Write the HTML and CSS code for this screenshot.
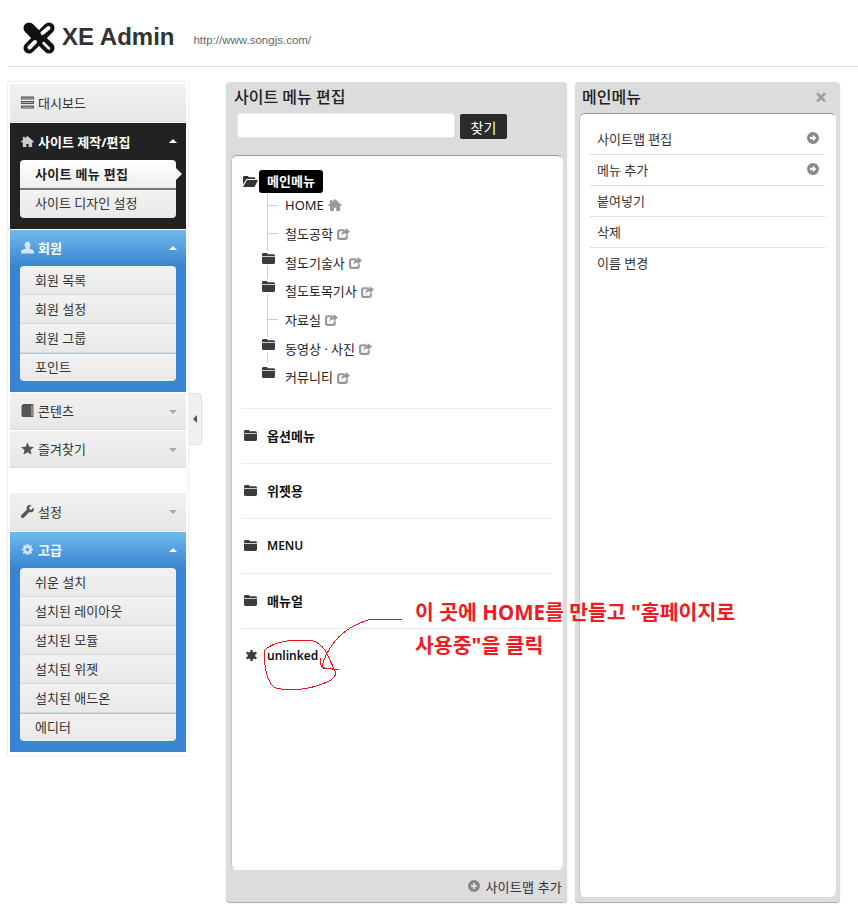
FILE: index.html
```html
<!DOCTYPE html>
<html lang="ko">
<head>
    <meta charset="UTF-8">
    <meta name="viewport" content="width=device-width, initial-scale=1.0">
    <title>XE Admin</title>
    <link rel="stylesheet" href="styles.css">
</head>
<body>
    <svg class="icon-defs" width="0" height="0">
        <symbol id="i-home" viewBox="0 0 14 12"><path d="M7 0 14 6.200 13 7.300 12 6.500V12H8.200V8.800H5.800V12H2V6.500L1 7.300 0 6.200 2 4.400V1H4V2.600Z"/></symbol>
        <symbol id="i-list" viewBox="0 0 13 12"><path d="M0 0H13V3H0ZM0 4.500H13V7.500H0ZM0 9H13V12H0Z"/><path d="M1 1.200H12V1.900H1ZM1 5.700H12V6.400H1ZM1 10.200H12V10.900H1Z" fill="#fff" opacity=".7"/></symbol>
        <symbol id="i-user" viewBox="0 0 13 12"><path d="M6.500 0C8.300 0 9.400 1.400 9.400 3.400 9.400 5 8.600 6.200 7.900 6.900 9.800 7.500 13 8.200 13 10V12H0V10C0 8.200 3.200 7.500 5.100 6.900 4.400 6.200 3.600 5 3.600 3.400 3.600 1.400 4.700 0 6.500 0Z"/></symbol>
        <symbol id="i-book" viewBox="0 0 11 12"><path d="M2 0H11V12H2C.9 12 0 11.300 0 10.500V2C0 .9.900 0 2 0Z"/><path d="M9.300 1.200H10V11H9.300Z" fill="#ddd"/></symbol>
        <symbol id="i-star" viewBox="0 0 13 12"><path d="M6.500 0 8.400 4.200 13 4.600 9.500 7.600 10.600 12 6.500 9.700 2.400 12 3.500 7.600 0 4.600 4.600 4.200Z"/></symbol>
        <symbol id="i-wrench" viewBox="0 0 13 13"><path d="M12.700 2.600 10.400 4.800 8.600 4.400 8.200 2.600 10.400.3C8.600-.4 6.700.2 6 1.600 5.500 2.600 5.600 3.700 6 4.500L.5 10C-.2 10.700-.2 11.700.4 12.400 1.100 13.100 2.200 13.100 2.900 12.400L8.300 7C9.300 7.500 10.500 7.500 11.500 6.900 12.800 6.100 13.300 4.300 12.700 2.600Z"/></symbol>
        <symbol id="i-cog" viewBox="-1 -1 14 14"><path fill-rule="evenodd" d="M5 0H7L7.300 1.500 8.500 2 9.800 1.200 11 2.500 10 3.700 10.500 5 12 5.200V6.900L10.500 7.200 10 8.400 10.900 9.700 9.600 11 8.300 10.100 7.200 10.500 6.900 12H5.100L4.800 10.500 3.600 10 2.300 10.900 1 9.700 1.900 8.400 1.500 7.200 0 6.900V5.100L1.500 4.800 2 3.600 1.100 2.300 2.400 1 3.700 1.900 4.800 1.500ZM6 4A2 2 0 1 0 6 8 2 2 0 1 0 6 4Z"/></symbol>
        <symbol id="i-folder" viewBox="0 0 13 11"><path d="M1.500 0H5L5.800 1.300H11.500C12.300 1.300 13 1.900 13 2.700V3.300H0V1.500C0 .7.700 0 1.500 0ZM0 4H13V9.500C13 10.300 12.300 11 11.500 11H1.500C.7 11 0 10.300 0 9.500Z"/></symbol>
        <symbol id="i-open" viewBox="0 0 15 11"><path d="M1.300 0H5L5.800 1.200H11C11.700 1.200 12.200 1.700 12.200 2.400V3H3.500L0 8.500V1.300C0 .6.600 0 1.300 0ZM4 4H15L11.500 11H0Z"/></symbol>
        <symbol id="i-share" viewBox="0 0 12 11"><path fill-rule="evenodd" d="M2.200 1H7V3H2.800C2.300 3 2 3.300 2 3.800V8.200C2 8.700 2.300 9 2.800 9H7.200C7.700 9 8 8.700 8 8.200V7.500L10 5.700V8.800C10 10 9.100 11 7.800 11H2.200C1 11 0 10 0 8.800V3.200C0 2 1 1 2.200 1Z"/><path d="M8 0 12 3.300 8 6.800V4.900C6.200 4.900 5 5.600 4 7.500 4 4.400 5.600 2.200 8 2.100Z"/></symbol>
        <symbol id="i-asterisk" viewBox="0 0 11 11"><circle cx="5.500" cy="5.500" r="3.800"/><path d="M4.300 0H6.700V11H4.300ZM9.800 1.400 11 3.500 1.200 9.600 0 7.500ZM1.200 1.400 11 7.500 9.800 9.600 0 3.500Z"/></symbol>
        <symbol id="i-arrow" viewBox="0 0 12 12"><path fill-rule="evenodd" d="M6 0A6 6 0 1 1 6 12 6 6 0 1 1 6 0ZM6.300 3 5.500 3.800 6.300 4.800H3V7.200H6.300L5.500 8.200 6.300 9 9.300 6Z"/></symbol>
        <symbol id="i-plus" viewBox="0 0 12 12"><path fill-rule="evenodd" d="M6 0A6 6 0 1 1 6 12 6 6 0 1 1 6 0ZM5 3V5H3V7H5V9H7V7H9V5H7V3Z"/></symbol>
    </svg>

    <header class="site-head">
        <svg class="logo" viewBox="0 0 32 32" width="32" height="32">
            <path d="M6 6 26 26" stroke="#111" stroke-width="11" stroke-linecap="round"/>
            <path d="M26 6 6 26" stroke="#111" stroke-width="11" stroke-linecap="round"/>
            <path d="M19.500 11 25.500 6M6.500 25.500 12 20" stroke="#fff" stroke-width="4" stroke-linecap="round" fill="none"/>
            <path d="M20.500 21 26 26.500" stroke="#fff" stroke-width="2.500" stroke-linecap="round" fill="none"/>
        </svg>
        <span class="logo-text">XE Admin</span>
        <a class="site-url" href="#">http://www.songjs.com/</a>
    </header>

    <div class="layout">
        <nav class="sidebar">
            <div class="nav-head tall"><svg class="nav-icon"><use href="#i-list"/></svg>대시보드</div>

            <section class="nav-open nav-dark">
                <div class="nav-head bold"><svg class="nav-icon"><use href="#i-home"/></svg>사이트 제작/편집<i class="caret up"></i></div>
                <ul class="sub">
                    <li class="active">사이트 메뉴 편집</li>
                    <li>사이트 디자인 설정</li>
                </ul>
            </section>

            <section class="nav-open nav-blue">
                <div class="nav-head bold"><svg class="nav-icon"><use href="#i-user"/></svg>회원<i class="caret up"></i></div>
                <ul class="sub">
                    <li>회원 목록</li>
                    <li>회원 설정</li>
                    <li>회원 그룹</li>
                    <li class="last">포인트</li>
                </ul>
            </section>

            <div class="nav-head"><svg class="nav-icon"><use href="#i-book"/></svg>콘텐츠<i class="caret"></i></div>
            <div class="nav-head"><svg class="nav-icon"><use href="#i-star"/></svg>즐겨찾기<i class="caret"></i></div>

            <div class="nav-gap"></div>

            <div class="nav-head tall"><svg class="nav-icon"><use href="#i-wrench"/></svg>설정<i class="caret"></i></div>

            <section class="nav-open nav-blue">
                <div class="nav-head bold"><svg class="nav-icon"><use href="#i-cog"/></svg>고급<i class="caret up"></i></div>
                <ul class="sub">
                    <li>쉬운 설치</li>
                    <li>설치된 레이아웃</li>
                    <li>설치된 모듈</li>
                    <li>설치된 위젯</li>
                    <li>설치된 애드온</li>
                    <li class="last">에디터</li>
                </ul>
            </section>

            <div class="collapse"><i></i></div>
        </nav>

        <main class="panel panel-main">
            <h2>사이트 메뉴 편집</h2>
            <form class="search">
                <input type="text">
                <button type="button">찾기</button>
            </form>
            <div class="panel-body tree">
                <div class="root">
                    <svg class="folder-open"><use href="#i-open"/></svg><span class="chip">메인메뉴</span>
                </div>
                <ul class="branch">
                    <li><span class="dash"></span>HOME <svg class="ico-home"><use href="#i-home"/></svg></li>
                    <li><span class="dash"></span>철도공학 <svg class="ico-share"><use href="#i-share"/></svg></li>
                    <li><svg class="ico-folder"><use href="#i-folder"/></svg>철도기술사 <svg class="ico-share"><use href="#i-share"/></svg></li>
                    <li><svg class="ico-folder"><use href="#i-folder"/></svg>철도토목기사 <svg class="ico-share"><use href="#i-share"/></svg></li>
                    <li><span class="dash"></span>자료실 <svg class="ico-share"><use href="#i-share"/></svg></li>
                    <li><svg class="ico-folder"><use href="#i-folder"/></svg>동영상 · 사진 <svg class="ico-share"><use href="#i-share"/></svg></li>
                    <li><svg class="ico-folder"><use href="#i-folder"/></svg>커뮤니티 <svg class="ico-share"><use href="#i-share"/></svg></li>
                </ul>
                <div class="tree-row"><svg class="ico-folder"><use href="#i-folder"/></svg>옵션메뉴</div>
                <div class="tree-row"><svg class="ico-folder"><use href="#i-folder"/></svg>위젯용</div>
                <div class="tree-row latin"><svg class="ico-folder"><use href="#i-folder"/></svg>MENU</div>
                <div class="tree-row"><svg class="ico-folder"><use href="#i-folder"/></svg>매뉴얼</div>
                <div class="tree-row latin"><svg class="ico-asterisk"><use href="#i-asterisk"/></svg>unlinked</div>
            </div>
            <div class="panel-foot"><svg class="ico-plus"><use href="#i-plus"/></svg>사이트맵 추가</div>
        </main>

        <aside class="panel panel-side">
            <h2>메인메뉴<span class="close">×</span></h2>
            <ul class="panel-body action-list">
                <li>사이트맵 편집<svg class="ico-arrow"><use href="#i-arrow"/></svg></li>
                <li>메뉴 추가<svg class="ico-arrow"><use href="#i-arrow"/></svg></li>
                <li>붙여넣기</li>
                <li>삭제</li>
                <li>이름 변경</li>
            </ul>
        </aside>
    </div>

    <!-- red notes drawn over the capture -->
    <svg class="scribble" width="858" height="920">
        <path d="M402 619H373C366 620 361 622 352 627 345 631 340 635 336 640 331 646 327 652 324 660 322 665 322 668 325 668L339 670"/>
        <path d="M320 658C320 663 321 666 323 668L333 669"/>
        <path d="M265 650C270 645 279 641 297 640 306 640 313 640 316 642 321 645 325 649 327 654 330 660 333 667 336 673 335 677 332 680 327 682 320 685 312 688 302 689 292 690 283 690 276 688 271 686 269 682 267 675 265 668 264 658 265 650Z"/>
    </svg>
    <p class="note">이 곳에 HOME를 만들고 "홈페이지로<br>사용중"을 클릭</p>
</body>
</html>
```

FILE: styles.css
```css
* {
    box-sizing: border-box;
}

body {
    margin: 0;
    font-family: "Noto Sans", "Noto Sans CJK KR", sans-serif;
    font-size: 13px;
    color: #222;
    background-color: #fff;
}

ul {
    list-style: none;
    margin: 0;
    padding: 0;
}

.icon-defs {
    position: absolute;
}

/* header */
.site-head {
    display: flex;
    align-items: center;
    height: 67px;
    margin-left: 8px;
    padding: 10px 0 0 15px;
    border-bottom: 1px solid #ddd;
}

.logo {
    flex: none;
    margin-right: 7px;
}

.logo-text {
    font-family: "Liberation Sans", Arial, sans-serif;
    font-size: 24px;
    font-weight: bold;
    color: #333;
    margin-top: -2px;
}

.site-url {
    font-family: "Liberation Sans", Arial, sans-serif;
    font-size: 11.500px;
    color: #666;
    text-decoration: none;
    margin: 3px 0 0 19px;
}

.layout {
    display: flex;
    align-items: flex-start;
    padding: 15px 0 18px 8px;
}

/* sidebar */
.sidebar {
    position: relative;
    width: 180px;
    flex: none;
    padding: 2px;
    box-shadow: 0 0 2px rgba(0, 0, 0, 0.18);
    background-color: #fff;
}

.nav-head {
    display: flex;
    align-items: center;
    position: relative;
    height: 37px;
    margin-bottom: 1px;
    padding: 0 0 2px 11px;
    background: linear-gradient(#f1f1f1, #e7e7e7);
    border-bottom: 1px solid #dcdcdc;
    color: #333;
}

.nav-head.tall {
    height: 38px;
    padding-bottom: 0;
}

.nav-head.bold {
    font-weight: bold;
}

.nav-icon {
    width: 13px;
    height: 13px;
    margin-right: 4px;
    fill: #555;
    flex: none;
}

.caret {
    position: absolute;
    right: 9px;
    top: 17px;
    border-left: 4px solid transparent;
    border-right: 4px solid transparent;
    border-top: 4px solid #aaa;
}

.caret.up {
    top: 16px;
    border-top: 0;
    border-bottom: 4px solid #fff;
}

.nav-open {
    margin-bottom: 1px;
    padding-bottom: 11px;
}

.nav-open .nav-head {
    height: 36px;
    margin-bottom: 0;
    border-bottom: 0;
    background: none;
    color: #fff;
}

.nav-open .nav-icon {
    fill: #d4e6f6;
}

.nav-dark {
    background-color: #222;
}

.nav-dark .nav-head {
    height: 37px;
    padding-bottom: 0;
}

.nav-dark .nav-icon {
    fill: #ccc;
}

.nav-blue {
    background: linear-gradient(#6fbaeb, #3985d1 36px) #3985d1;
}

.sub {
    margin: 0 10px;
    border-radius: 4px;
    overflow: hidden;
}

.sub li {
    height: 29px;
    line-height: 29px;
    padding-left: 15px;
    color: #333;
    background: linear-gradient(#f2f2f2, #e9e9e9);
    border-bottom: 1px solid #d8d8d8;
}

.sub li:last-child {
    height: 28px;
    line-height: 27px;
    border-bottom: 0;
}

.sub li.last {
    border-top: 1px solid #a9c3dc;
}

.nav-dark .sub {
    overflow: visible;
    border-radius: 4px;
}

.nav-dark .sub li {
    border-radius: 0 0 4px 4px;
}

.nav-dark .sub li.active {
    position: relative;
    height: 30px;
    line-height: 28px;
    font-weight: bold;
    letter-spacing: 0.3px;
    color: #222;
    background: linear-gradient(#fff, #eee);
    border-radius: 4px 4px 0 0;
    border-bottom: 2px solid #777;
}

.nav-dark .sub li.active::after {
    content: "";
    position: absolute;
    right: -6px;
    top: 8px;
    border-top: 6px solid transparent;
    border-bottom: 6px solid transparent;
    border-left: 6px solid #f4f4f4;
}

.nav-gap {
    height: 24px;
}

.collapse {
    position: absolute;
    left: 181px;
    top: 311px;
    width: 13px;
    height: 52px;
    display: flex;
    align-items: center;
    justify-content: center;
    background-color: #f0f0f0;
    border: 1px solid #e2e2e2;
    border-left: 0;
    border-radius: 0 3px 3px 0;
}

.collapse i {
    border-top: 4px solid transparent;
    border-bottom: 4px solid transparent;
    border-right: 4px solid #555;
}

/* panels */
.panel {
    flex: none;
    height: 820px;
    display: flex;
    flex-direction: column;
    background-color: #dcdcdc;
    border-radius: 4px;
    box-shadow: 0 1px 1px #aaa;
}

.panel h2 {
    margin: 0;
    font-size: 16px;
    font-weight: 500;
    line-height: 20px;
    color: #222;
    padding: 5px 8px 0;
}

.panel-main {
    width: 341px;
    margin-left: 38px;
}

.panel-side {
    width: 265px;
    margin-left: 8px;
}

.panel-side h2 {
    padding-left: 7px;
}

.search {
    display: flex;
    gap: 5px;
    margin: 6px 0 0 11px;
}

.search input {
    width: 218px;
    height: 25px;
    margin: 0;
    border: 1px solid #e8e8e8;
    border-radius: 3px;
    background-color: #fff;
}

.search button {
    width: 47px;
    height: 25px;
    margin-top: 1px;
    padding: 0;
    border: 0;
    border-radius: 2px;
    background-color: #2b2b2b;
    color: #fff;
    font: 14px "Noto Sans", "Noto Sans CJK KR", sans-serif;
}

.panel-body {
    background-color: #fff;
    border: 1px solid #fff;
    border-top-color: #999;
    border-left-color: #c4c4c4;
    border-radius: 6px;
}

/* site map tree */
.tree {
    height: 715px;
    margin: 16px 4px 0 5px;
    padding: 13px 10px 0;
}

.root {
    display: flex;
    align-items: center;
    height: 24px;
}

.folder-open {
    width: 15px;
    height: 11px;
    margin: 0 1px 0 1px;
    fill: #333;
}

.chip {
    padding: 0 8px;
    height: 23px;
    line-height: 22px;
    border-radius: 3px;
    background-color: #000;
    color: #fff;
    font-weight: bold;
}

.branch {
    margin: -2px 0 21px 25px;
    border-left: 1px solid #ccc;
    height: 196px;
}

.branch li {
    display: flex;
    align-items: center;
    gap: 4px;
    height: 28.700px;
    padding-left: 17px;
    position: relative;
}

.branch li:first-child {
    height: 28px;
}

.branch li:last-child {
    background-color: #fff;
    margin-left: -1px;
    padding-left: 18px;
}

.dash {
    position: absolute;
    left: 0;
    top: 14px;
    width: 10px;
    border-top: 1px solid #ccc;
}

.branch .ico-folder {
    position: absolute;
    left: -6px;
    top: 5px;
    margin: 0;
    background-color: #fff;
    box-shadow: 0 0 0 2px #fff;
}

.branch li:last-child .ico-folder {
    left: -5px;
}

.ico-home {
    width: 14px;
    height: 12px;
    fill: #999;
    flex: none;
}

.ico-share {
    width: 13px;
    height: 12px;
    fill: #999;
    margin-top: 2px;
    flex: none;
}

.ico-folder {
    width: 13px;
    height: 11px;
    fill: #3b3b3b;
    margin-right: 10px;
    flex: none;
}

.ico-asterisk {
    width: 11px;
    height: 11px;
    fill: #3b3b3b;
    margin: 0 10px 0 2px;
    flex: none;
}

.tree-row {
    display: flex;
    align-items: center;
    height: 55px;
    padding: 0 0 2px 2px;
    font-weight: 600;
    color: #111;
    border-top: 1px dotted #ddd;
}

.tree-row.latin {
    font-size: 12px;
    padding-bottom: 1px;
}

.panel-foot {
    display: flex;
    align-items: center;
    justify-content: flex-end;
    gap: 5px;
    height: 32px;
    padding-right: 5px;
    letter-spacing: 0.2px;
    color: #333;
}

.ico-plus,
.ico-arrow {
    width: 12px;
    height: 12px;
    fill: #888;
    flex: none;
}

/* right panel */
.close {
    float: right;
    font-size: 21px;
    font-weight: bold;
    line-height: 20px;
    color: #999;
    margin-right: 5px;
}

.action-list {
    flex: 1;
    margin: 6px 4px 5px;
    padding: 10px 10px 0;
}

.action-list li {
    display: flex;
    align-items: center;
    justify-content: space-between;
    height: 31px;
    padding: 0 6px 2px 7px;
    color: #333;
    border-bottom: 1px solid #ddd;
}

.action-list li:last-child {
    border-bottom: 0;
}

/* notes */
.scribble {
    position: absolute;
    left: 0;
    top: 0;
    pointer-events: none;
}

.scribble path {
    fill: none;
    stroke: #e8141e;
    stroke-width: 1;
    shape-rendering: crispEdges;
}

.note {
    position: absolute;
    left: 415px;
    top: 596px;
    margin: 0;
    font-size: 20.500px;
    font-weight: bold;
    line-height: 33px;
    color: #ed1c24;
}
```
